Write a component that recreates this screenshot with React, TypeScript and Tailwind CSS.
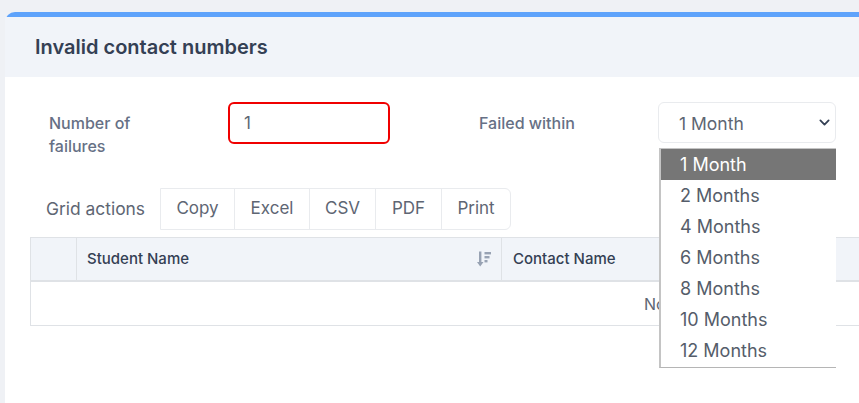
const months = ["1 Month", "2 Months", "4 Months", "6 Months", "8 Months", "10 Months", "12 Months"];
const actions = [
    { label: "Copy", width: "w-[73px]" },
    { label: "Excel", width: "w-[75px]" },
    { label: "CSV", width: "w-[66px]" },
    { label: "PDF", width: "w-[66px]" },
    { label: "Print", width: "w-[69px]" },
];

const SortIcon = () => (
    <svg width="16" height="16" viewBox="0 0 16 16" className="text-[#98a2b3]" fill="currentColor">
        <path d="M3 0.5h2.4v10.5h2.1L4.2 15.5 1 11h2z" />
        <rect x="8.5" y="1" width="6.5" height="2.4" />
        <rect x="8.5" y="5" width="5" height="2.4" />
        <rect x="8.5" y="9" width="3" height="2.4" />
    </svg>
);

const App = () => {
    return (
        <div className="w-[859px] h-[403px] overflow-hidden bg-[#eff1f5] pt-3 pl-[5px] font-['Inter',sans-serif] text-[17px] text-[#5e6673]">
            <div className="relative w-[900px] h-[391px] bg-white rounded-tl-[10px] border-t-[5px] border-[#5ea3fb]">
                <div className="h-[60px] bg-[#f1f4f9] pl-[30px] flex items-center text-[20px] font-semibold text-[#344054]">
                    Invalid contact numbers
                </div>

                <div className="flex items-start pl-[44px] pt-[25px]">
                    <label className="w-[179px] mt-[10px] leading-[23px] text-[16px] font-medium text-[#667085]">
                        Number of
                        <br />
                        failures
                    </label>
                    <div className="w-[162px] h-[42px] rounded-[6px] border-2 border-[#f00000] pl-[14px] pt-[2px] flex items-center">
                        1
                    </div>
                    <label className="ml-[89px] w-[179px] mt-[10px] leading-[23px] text-[16px] font-medium text-[#667085]">
                        Failed within
                    </label>
                    <div className="w-[178px] h-[41px] rounded-[6px] border border-[#e9ebee] pl-[20px] pr-[5px] flex items-center justify-between text-[17.5px]">
                        <span className="pt-[3px]">1 Month</span>
                        <svg width="11" height="11" viewBox="0 0 16 16" fill="none" stroke="#344054" strokeWidth="2.6" strokeLinecap="round" strokeLinejoin="round">
                            <path d="M2 5l6 6 6-6" />
                        </svg>
                    </div>
                </div>

                <div className="flex items-center ml-[25px] mt-[30px]">
                    <span className="w-[130px] pl-[16px] text-[17.4px] whitespace-nowrap">Grid actions</span>
                    <div className="flex h-[42px] rounded-r-[6px] border border-[#e9ebee]">
                        {actions.map((a, i) => (
                            <div
                                key={a.label}
                                className={`${a.width} flex items-center justify-center ${i > 0 ? "border-l border-[#e9ebee]" : ""}`}
                            >
                                {a.label}
                            </div>
                        ))}
                    </div>
                </div>

                <div className="ml-[25px] mt-[7px] w-[860px] border border-[#dfe2e6]">
                    <div className="flex h-[44px] bg-[#f1f4f9] border-b-2 border-[#dfe2e6] text-[15px] font-medium text-[#344054]">
                        <div className="w-[46px] border-r border-[#dfe2e6]" />
                        <div className="w-[425px] border-r border-[#dfe2e6] pl-[10px] pr-[9px] flex items-center justify-between">
                            <span>Student Name</span>
                            <SortIcon />
                        </div>
                        <div className="flex-1 pl-[11px] flex items-center">Contact Name</div>
                    </div>
                    <div className="h-[43px] flex items-center pl-[613px] whitespace-nowrap text-[16px]">
                        No data available in table
                    </div>
                </div>

                <div className="absolute left-[654px] top-[131px] w-[177px] h-[220px] bg-white border-l-2 border-t border-b border-[#c4c4c4] border-b-[#b5b5b5] text-[#555d6a] text-[18px]">
                    {months.map((m, i) => (
                        <div
                            key={m}
                            className={`h-[31px] pl-[19px] flex items-center ${i === 0 ? "bg-[#767676] text-white" : ""}`}
                        >
                            {m}
                        </div>
                    ))}
                </div>
            </div>
        </div>
    );
};

export default App;
